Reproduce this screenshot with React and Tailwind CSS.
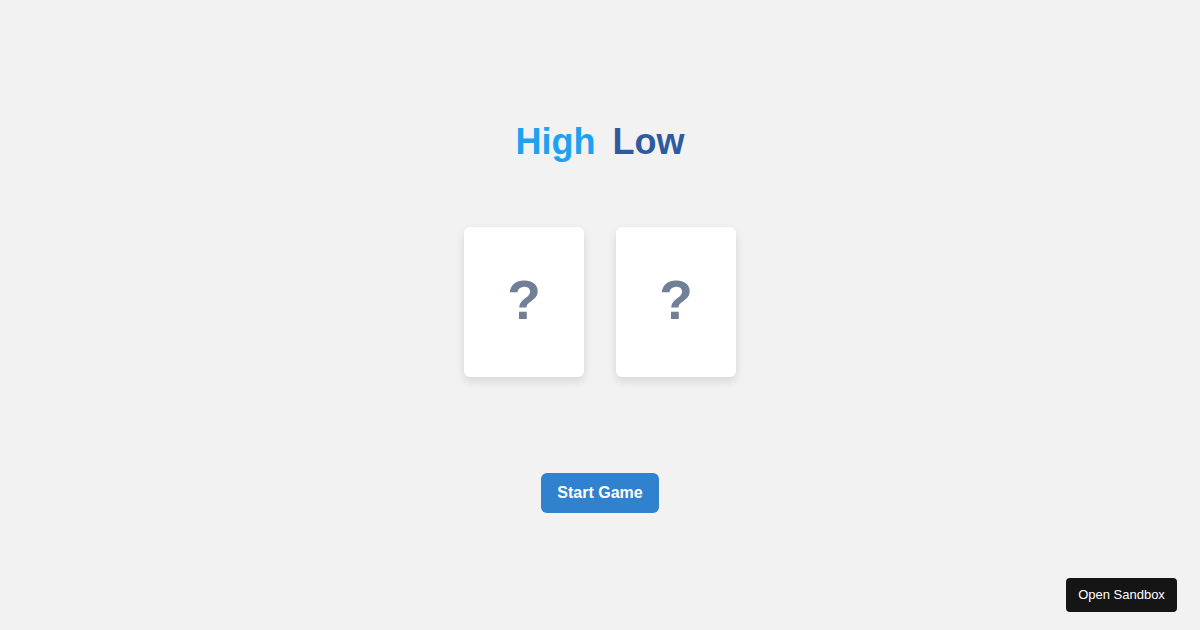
import React from 'react';

function Card() {
    return (
        <div className="w-[120px] h-[150px] bg-white rounded-md shadow-[0_4px_10px_rgba(0,0,0,0.12)] flex items-center justify-center">
            <span className="text-[55px] font-bold leading-none text-[#718096] -mt-[3px]">?</span>
        </div>
    );
}

export default function App() {
    return (
        <div
            className="relative min-h-screen w-full bg-[#f2f2f2] flex flex-col items-center pt-[120px]"
            style={{ fontFamily: '"Liberation Sans", Arial, sans-serif' }}
        >
            <h1 className="text-[36px] font-bold leading-[44px]">
                <span className="text-[#1da1f2] mr-[7px]">High</span>{' '}
                <span className="text-[#2f5aa0]">Low</span>
            </h1>

            <div className="mt-[63px] flex gap-8">
                <Card />
                <Card />
            </div>

            <button
                type="button"
                className="mt-[96px] h-10 px-4 rounded-md bg-[#3182ce] text-white text-base font-bold hover:bg-[#2b6cb0]"
            >
                Start Game
            </button>

            <button
                type="button"
                className="absolute right-[23px] bottom-[18px] h-[34px] w-[111px] rounded bg-[#151515] text-[13px] text-white"
            >
                Open Sandbox
            </button>
        </div>
    );
}
